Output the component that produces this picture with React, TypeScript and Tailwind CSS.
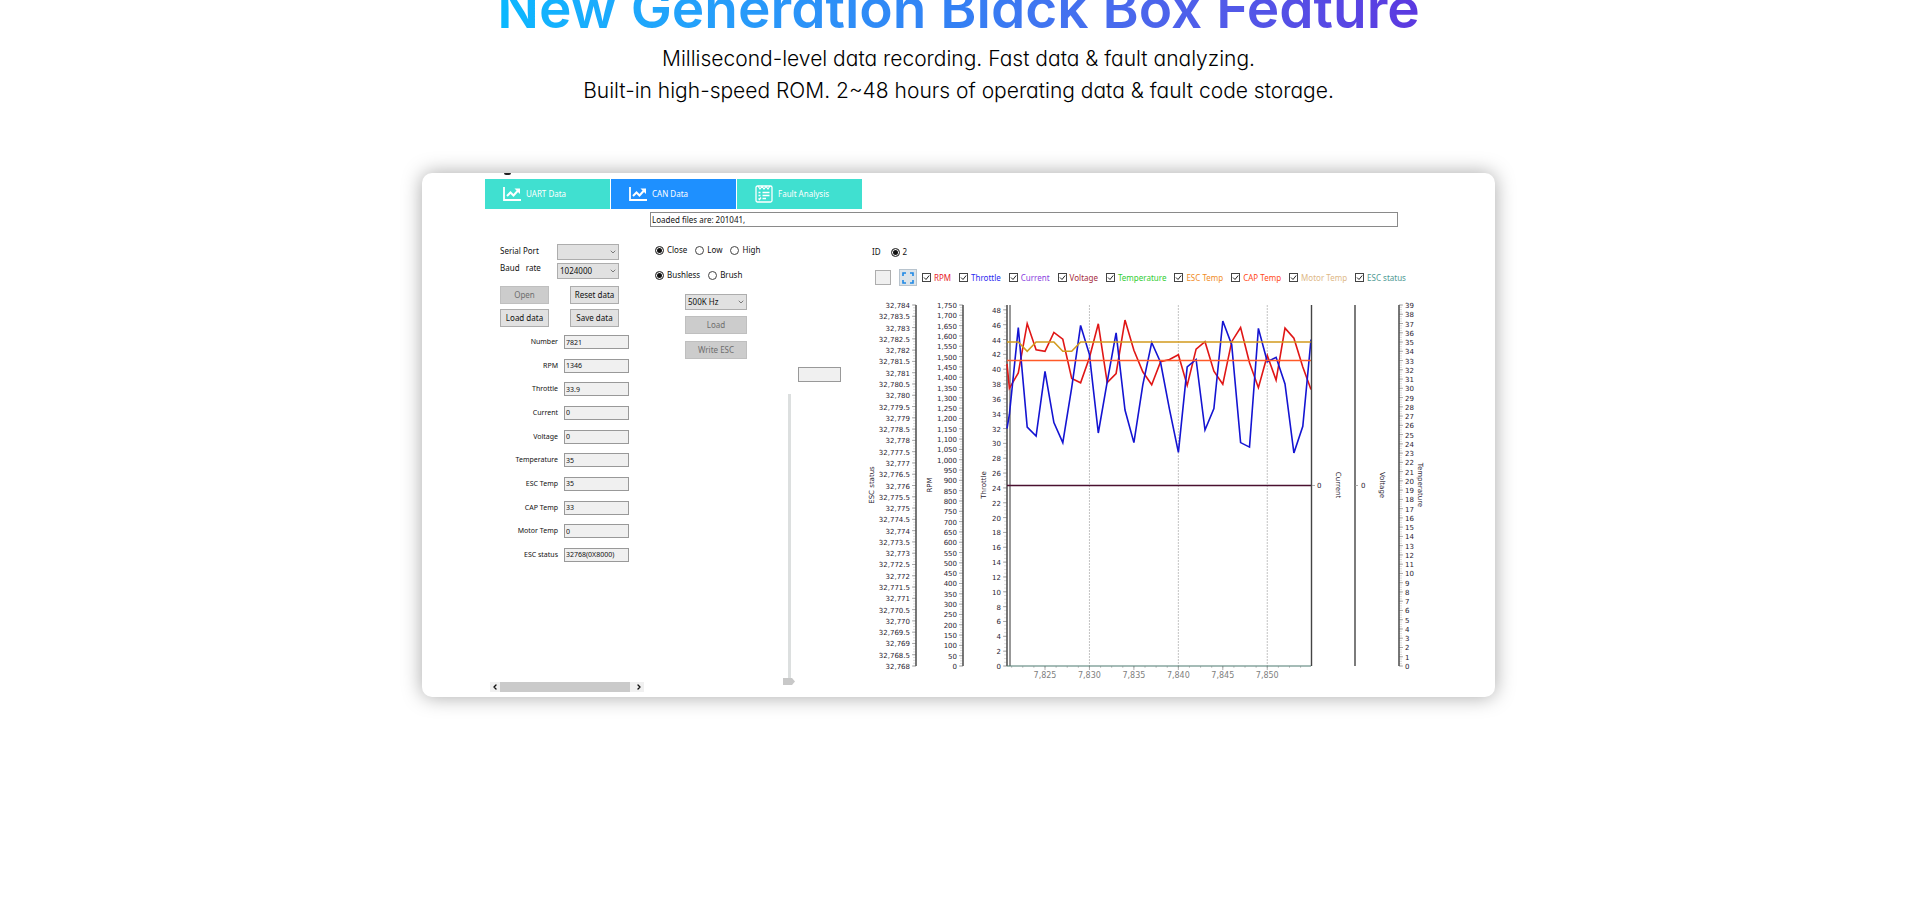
import { ReactNode, useState } from 'react'
import { ChevronDown, ChevronLeft, ChevronRight } from 'lucide-react'

const fields = [
    ['Number', '7821'],
    ['RPM', '1346'],
    ['Throttle', '33.9'],
    ['Current', '0'],
    ['Voltage', '0'],
    ['Temperature', '35'],
    ['ESC Temp', '35'],
    ['CAP Temp', '33'],
    ['Motor Temp', '0'],
    ['ESC status', '32768(0X8000)'],
]

const legend = [
    ['RPM', 'text-[#e8202a]'],
    ['Throttle', 'text-[#2a2af0]'],
    ['Current', 'text-[#8a3fe0]'],
    ['Voltage', 'text-[#a52a3a]'],
    ['Temperature', 'text-[#32cd32]'],
    ['ESC Temp', 'text-[#f08c1e]'],
    ['CAP Temp', 'text-[#ff4a20]'],
    ['Motor Temp', 'text-[#deb887]'],
    ['ESC status', 'text-[#4f9a94]'],
]

// first sample is at the left edge of the plot, the rest are one per record from 7821
const throttle = [32, 33.9, 45.6, 32.2, 31, 39.7, 32.8, 30.1, 37.5, 45.9, 42, 31.4, 38.3, 44.9, 34.5, 30.1, 37.9, 43.6, 40.9, 34.6, 28.8, 40.3, 41.3, 31.8, 34.7, 46.5, 43.3, 30.1, 29.5, 45.5, 41, 41.6, 38, 28.7, 32.3, 44]
const rpm = [1465, 1346, 1421, 1660, 1533, 1525, 1617, 1584, 1394, 1373, 1494, 1659, 1374, 1418, 1677, 1531, 1426, 1363, 1475, 1486, 1509, 1360, 1536, 1572, 1429, 1366, 1572, 1641, 1470, 1349, 1505, 1386, 1638, 1589, 1449, 1340]
const escTemp = [35, 35, 35, 34, 35, 35, 35, 34, 34, 35, 35, 35, 35, 35, 35, 35, 35, 35, 35, 35, 35, 35, 35, 35, 35, 35, 35, 35, 35, 35, 35, 35, 35, 35, 35, 35]

const TOP = 5
const BOTTOM = 366
const LEFT = 141
const RIGHT = 445

const xOf = (n: number) => 179 + (n - 7825) * 8.89
const yOf = (v: number, min: number, max: number) => BOTTOM - ((v - min) / (max - min)) * (BOTTOM - TOP)

function line(data: number[], max: number) {
    return data
        .map((v, i) => `${(i === 0 ? LEFT : Math.min(xOf(7820 + i), RIGHT)).toFixed(1)},${yOf(v, 0, max).toFixed(1)}`)
        .join(' ')
}

function range(from: number, to: number, step: number) {
    const out: number[] = []
    for (let v = from; v <= to + 0.001; v += step) out.push(v)
    return out
}

type AxisProps = { x: number; min: number; max: number; step: number; minor: number; title: string; titleX: number; right?: boolean }

function Axis({ x, min, max, step, minor, title, titleX, right }: AxisProps) {
    const dir = right ? 1 : -1
    return (
        <g>
            {range(min, max, minor).map((v) => (
                <line key={v} x1={x} x2={x + dir * 3} y1={yOf(v, min, max)} y2={yOf(v, min, max)} stroke="#b5b5b5" strokeWidth={0.5} />
            ))}
            {range(min, max, step).map((v) => (
                <g key={v}>
                    <line x1={x} x2={x + dir * 4} y1={yOf(v, min, max)} y2={yOf(v, min, max)} stroke="#999" strokeWidth={0.8} />
                    <text x={x + dir * 6} y={yOf(v, min, max) + 3} textAnchor={right ? 'start' : 'end'}>{v.toLocaleString('en-US')}</text>
                </g>
            ))}
            <line x1={x} x2={x} y1={TOP} y2={BOTTOM} stroke="#555" strokeWidth={1.6} />
            <AxisTitle x={titleX} right={right}>{title}</AxisTitle>
        </g>
    )
}

function AxisTitle({ x, right, children }: { x: number; right?: boolean; children: ReactNode }) {
    return (
        <text transform={`translate(${x} 185) rotate(${right ? 90 : -90})`} y={3} textAnchor="middle">{children}</text>
    )
}

function Chart() {
    return (
        <svg viewBox="0 0 564 382" className="mt-[14px] block w-full fill-[#2a2230] font-['DejaVu_Sans',sans-serif] text-[7px]" role="img" aria-label="CAN data chart">
            <Axis x={50} min={32768} max={32784} step={0.5} minor={0.125} title="ESC status" titleX={5} />
            <Axis x={97} min={0} max={1750} step={50} minor={12.5} title="RPM" titleX={63} />
            <Axis x={LEFT} min={0} max={48.65} step={2} minor={0.5} title="Throttle" titleX={117} />
            <Axis x={533} min={0} max={39} step={1} minor={0.25} title="Temperature" titleX={555} right />

            {[7830, 7840, 7850].map((n) => (
                <line key={n} x1={xOf(n)} x2={xOf(n)} y1={TOP} y2={BOTTOM} stroke="#b4b4b4" strokeWidth={0.8} strokeDasharray="2 1" />
            ))}
            {range(7821.25, 7854, 1.25).map((n) => (
                <line key={n} x1={xOf(n)} x2={xOf(n)} y1={BOTTOM} y2={BOTTOM + 2} stroke="#aaa" strokeWidth={0.6} />
            ))}
            {range(7825, 7850, 5).map((n) => (
                <g key={n}>
                    <line x1={xOf(n)} x2={xOf(n)} y1={BOTTOM} y2={BOTTOM + 4} stroke="#999" strokeWidth={0.8} />
                    <text x={xOf(n)} y={378} textAnchor="middle" className="fill-[#808080] text-[8px]">{n.toLocaleString('en-US')}</text>
                </g>
            ))}

            <line x1={144} x2={144} y1={TOP} y2={BOTTOM} stroke="#333" strokeWidth={1} />
            <g fill="none" strokeWidth={1.6}>
                <polyline points={line(rpm, 1750)} stroke="#e01616" />
                <polyline points={line(throttle, 48.65)} stroke="#1414d2" />
                <line x1={LEFT} x2={RIGHT} y1={yOf(33, 0, 39)} y2={yOf(33, 0, 39)} stroke="#ff5a28" />
                <polyline points={line(escTemp, 39)} stroke="#d29a1e" />
                <line x1={LEFT} x2={RIGHT} y1={185.5} y2={185.5} stroke="#4a1030" />
                <line x1={LEFT} x2={RIGHT} y1={BOTTOM} y2={BOTTOM} stroke="#4d7a70" strokeWidth={1.2} />
            </g>

            <g stroke="#444" strokeWidth={1.4}>
                <line x1={445.5} x2={445.5} y1={TOP} y2={BOTTOM} />
                <line x1={489} x2={489} y1={TOP} y2={BOTTOM} />
            </g>
            <line x1={446} x2={449} y1={185.5} y2={185.5} stroke="#999" strokeWidth={0.8} />
            <line x1={489} x2={492} y1={185.5} y2={185.5} stroke="#999" strokeWidth={0.8} />
            <text x={451} y={188}>0</text>
            <text x={495} y={188}>0</text>
            <AxisTitle x={473} right>Current</AxisTitle>
            <AxisTitle x={517} right>Voltage</AxisTitle>
        </svg>
    )
}

function TrendIcon() {
    return (
        <svg viewBox="0 0 18 14" className="h-[14px] w-[18px]" fill="none" stroke="currentColor" strokeWidth={1.8}>
            <path d="M1 0v13h17" />
            <path d="M4 9l3.5-3.5 3 3L15 3.5" strokeWidth={2} />
            <path d="M11.5 1.5H17V7z" fill="currentColor" stroke="none" />
        </svg>
    )
}

function ReportIcon() {
    return (
        <svg viewBox="0 0 18 18" className="size-[18px]" fill="none" stroke="currentColor" strokeWidth={1.3}>
            <rect x="1" y="1" width="16" height="16" rx="1.5" />
            <path d="M3 1l2 3 2-2.5 2 2.5 2-2.5 2 2.5 2-3" strokeWidth={1.1} />
            <path d="M3.5 7.5h2M7.5 7.5h7M3.5 10.5h2M7.5 10.5h7M3.5 13.5l1 1 1.5-2M7.5 13.5h3.5" />
        </svg>
    )
}

function Tab({ label, icon, active, onClick }: { label: string; icon: ReactNode; active: boolean; onClick: () => void }) {
    return (
        <button onClick={onClick} className={`flex h-[30px] w-[125px] items-center gap-[5px] pl-[18px] text-white ${active ? 'bg-[#1e90ff]' : 'bg-[#40e0d0]'}`}>
            {icon}
            <span>{label}</span>
        </button>
    )
}

function Select({ label, options }: { label: string; options: string[] }) {
    return (
        <div className="relative w-[62px]">
            <select aria-label={label} className="block h-4 w-full appearance-none border border-[#adadad] bg-[#e1e1e1] pl-[2px]">
                {options.map((o) => <option key={o}>{o}</option>)}
            </select>
            <ChevronDown className="pointer-events-none absolute top-1 right-[2px] size-2 text-[#444]" />
        </div>
    )
}

function Radio({ name, label, checked }: { name: string; label: string; checked?: boolean }) {
    return (
        <label className="flex items-center gap-[3px]">
            <input type="radio" name={name} defaultChecked={checked} className="size-[9px] appearance-none rounded-full border border-[#444] bg-white checked:bg-[#111] checked:shadow-[inset_0_0_0_1px_white]" />
            {label}
        </label>
    )
}

const button = 'h-[18px] border border-[#adadad] bg-[#e1e1e1] text-center disabled:border-[#bfbfbf] disabled:bg-[#cccccc] disabled:text-[#6e6e6e]'

function App() {
    const [tab, setTab] = useState('CAN Data')

    return (
        <main className="min-h-screen overflow-hidden bg-white pr-[3px]">
            <header className="text-center font-['Inter',sans-serif] text-black [font-feature-settings:'cv11']">
                <h1 className="mx-auto -mt-6 w-fit bg-linear-to-r from-[#08b8ff] via-[#3380f4] to-[#5b38e0] bg-clip-text text-[55px] leading-[64px] font-semibold text-transparent">
                    New Generation Black Box Feature
                </h1>
                <p className="mt-[3px] text-[21px] leading-8 font-light">
                    Millisecond-level data recording. Fast data &amp; fault analyzing.<br />
                    Built-in high-speed ROM. 2~48 hours of operating data &amp; fault code storage.
                </p>
            </header>

            <section className="mx-auto mt-[66px] w-full max-w-[1073px] overflow-hidden rounded-[10px] bg-white pr-[65px] pl-[63px] font-['Noto_Sans',sans-serif] text-[8px] leading-[10px] text-[#111] shadow-[0_0_20px_rgba(0,0,0,0.35)]">
                <div className="h-[6px] pl-[19px]">
                    <div className="h-[2px] w-[7px] rounded-b-full bg-[#222]" />
                </div>
                <nav className="flex gap-px">
                    <Tab label="UART Data" icon={<TrendIcon />} active={tab === 'UART Data'} onClick={() => setTab('UART Data')} />
                    <Tab label="CAN Data" icon={<TrendIcon />} active={tab === 'CAN Data'} onClick={() => setTab('CAN Data')} />
                    <Tab label="Fault Analysis" icon={<ReportIcon />} active={tab === 'Fault Analysis'} onClick={() => setTab('Fault Analysis')} />
                </nav>
                <div className="mt-[3px] pr-8 pl-[165px]">
                    <input aria-label="Loaded files" readOnly value="Loaded files are: 201041," className="block h-[15px] w-full border border-[#8a8a8a] px-px" />
                </div>

                <div className="flex">
                    <div className="flex w-[165px] shrink-0 flex-col pt-[17px] pb-[5px]">
                        <div className="ml-[15px] grid w-[119px] grid-cols-[1fr_62px] gap-y-[3px]">
                            <span className="pt-[2px]">Serial Port</span>
                            <Select label="Serial Port" options={['']} />
                            <span className="whitespace-pre">Baud   rate</span>
                            <Select label="Baud rate" options={['1024000']} />
                        </div>
                        <div className="mt-[7px] ml-[15px] grid w-[119px] grid-cols-[49px_49px] justify-between gap-y-[5px]">
                            <button disabled className={button}>Open</button>
                            <button className={button}>Reset data</button>
                            <button className={button}>Load data</button>
                            <button className={button}>Save data</button>
                        </div>
                        <div className="mt-2 flex h-[227px] flex-col justify-between text-[7px]">
                            {fields.map(([label, value]) => (
                                <label key={label} className="flex items-center gap-[6px]">
                                    <span className="w-[73px] text-right">{label}</span>
                                    <input readOnly value={value} className="h-[14px] w-[65px] border border-[#999] bg-[#f0f0f0] px-px" />
                                </label>
                            ))}
                        </div>
                        <div className="mt-auto ml-[5px] flex h-[10px] w-[154px] bg-[#f0f0f0]">
                            <button aria-label="Scroll left" className="flex w-[10px] items-center justify-center"><ChevronLeft className="size-2" strokeWidth={4} /></button>
                            <div className="w-[130px] bg-[#cacaca]" />
                            <button aria-label="Scroll right" className="ml-auto flex w-[10px] items-center justify-center"><ChevronRight className="size-2" strokeWidth={4} /></button>
                        </div>
                    </div>

                    <div className="w-[216px] shrink-0 pt-[18px] pl-[5px]">
                        <div className="flex gap-2">
                            <Radio name="level" label="Close" checked />
                            <Radio name="level" label="Low" />
                            <Radio name="level" label="High" />
                        </div>
                        <div className="mt-[15px] flex gap-2">
                            <Radio name="motor" label="Bushless" checked />
                            <Radio name="motor" label="Brush" />
                        </div>
                        <div className="mt-[14px] ml-[30px] flex w-[62px] flex-col">
                            <Select label="Frequency" options={['500K Hz']} />
                            <button disabled className={`mt-[6px] ${button}`}>Load</button>
                            <button disabled className={`mt-[7px] ${button}`}>Write ESC</button>
                        </div>
                        <input aria-label="Position" readOnly className="mt-2 ml-[143px] block h-[15px] w-[43px] border border-[#999] bg-[#f0f0f0]" />
                        <input type="range" aria-label="Position slider" defaultValue={0} className="mt-3 ml-[128px] block h-[291px] w-3 appearance-none bg-[linear-gradient(#dcdfdf,#dcdfdf)] bg-[length:3px_100%] bg-center bg-no-repeat [direction:rtl] [writing-mode:vertical-lr] [&::-webkit-slider-thumb]:h-[7px] [&::-webkit-slider-thumb]:w-3 [&::-webkit-slider-thumb]:appearance-none [&::-webkit-slider-thumb]:bg-[#c8c8c8] [&::-webkit-slider-thumb]:[clip-path:polygon(0_0,75%_0,100%_50%,75%_100%,0_100%)]" />
                    </div>

                    <div className="min-w-0 flex-1 pt-5 pb-[15px]">
                        <div className="flex h-[10px] items-center gap-[10px] pl-[6px]">
                            <span>ID</span>
                            <Radio name="id" label="2" checked />
                        </div>
                        <div className="mt-3 flex h-[17px] items-center pl-[9px]">
                            <button aria-label="Clear" className="h-[15px] w-4 border border-[#adadad] bg-[#f0f0f0]" />
                            <button aria-label="Fit to view" className="ml-2 flex h-[17px] w-[18px] items-center justify-center border border-[#b8c4ce] bg-[#dce4ea] text-[#1e88e5]">
                                <svg viewBox="0 0 12 12" className="size-3 shrink-0" fill="none" stroke="currentColor" strokeWidth={1.6}>
                                    <path d="M1 4V1h3M8 1h3v3M11 8v3H8M4 11H1V8" />
                                </svg>
                            </button>
                            <div className="ml-[5px] flex gap-2">
                                {legend.map(([label, color]) => (
                                    <label key={label} className={`flex items-center gap-[3px] whitespace-nowrap ${color}`}>
                                        <span className="grid">
                                            <input type="checkbox" defaultChecked className="peer col-start-1 row-start-1 size-[9px] appearance-none border border-[#444] bg-white" />
                                            <svg viewBox="0 0 9 9" className="pointer-events-none invisible col-start-1 row-start-1 size-[9px] peer-checked:visible" fill="none" stroke="#222">
                                                <path d="M2 4.5l2 2 3.2-4" />
                                            </svg>
                                        </span>
                                        {label}
                                    </label>
                                ))}
                            </div>
                        </div>
                        <Chart />
                    </div>
                </div>
            </section>
        </main>
    )
}

export default App
